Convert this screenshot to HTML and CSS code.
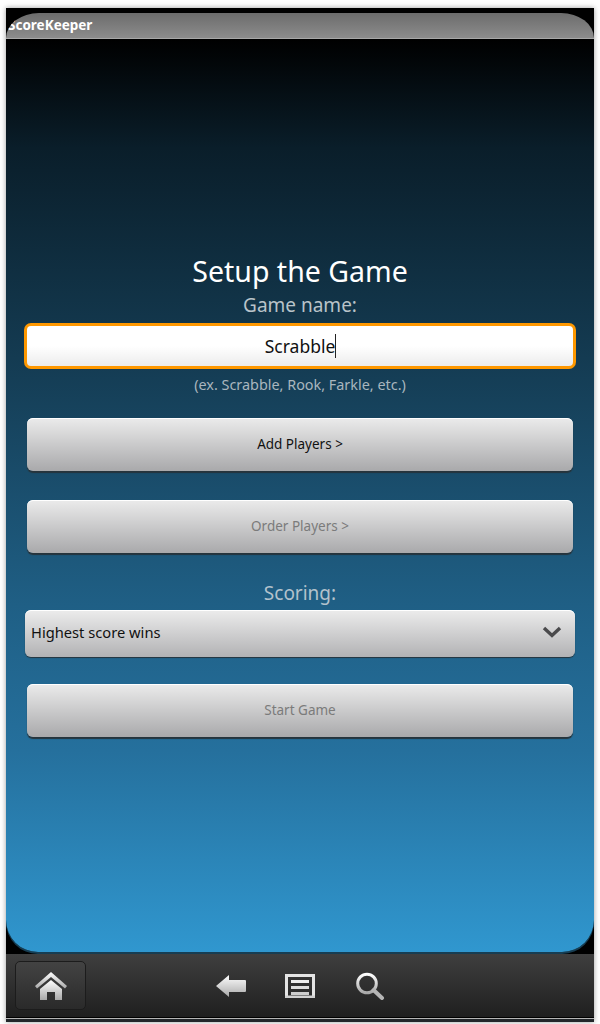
FILE: index.html
```html
<!DOCTYPE html>
<html lang="en">
<head>
  <meta charset="UTF-8">
  <title>ScoreKeeper</title>
  <link rel="stylesheet" href="styles.css">
</head>
<body>
  <div class="device">
    <div class="screen">
      <div class="title-bar">ScoreKeeper</div>
      <div class="content">
        <h1>Setup the Game</h1>
        <div class="label">Game name:</div>
        <div class="name-input"><span class="name-text">Scrabble</span></div>
        <div class="hint">(ex. Scrabble, Rook, Farkle, etc.)</div>
        <button class="btn btn-add">Add Players &gt;</button>
        <button class="btn btn-order off">Order Players &gt;</button>
        <div class="label label-scoring">Scoring:</div>
        <div class="select">
          <span>Highest score wins</span>
          <svg class="chevron" width="20" height="12" viewBox="0 0 20 12"><path d="M2 2 L10 9.5 L18 2" fill="none" stroke="#4a4a4c" stroke-width="3.4"/></svg>
        </div>
        <button class="btn btn-start off">Start Game</button>
      </div>
    </div>
    <div class="nav">
      <div class="home-btn">
        <svg width="34" height="30" viewBox="0 0 34 30">
          <defs>
            <linearGradient id="ico" x1="0" y1="0" x2="0" y2="1">
              <stop offset="0" stop-color="#ffffff"/>
              <stop offset="1" stop-color="#a9a9a9"/>
            </linearGradient>
          </defs>
          <path d="M1 15 L17 1 L33 15 L31 17.500 L17 6 L3 17.500 Z" fill="url(#ico)"/>
          <path d="M6 18 L17 9 L28 18 V29 H21 V21 H13 V29 H6 Z" fill="url(#ico)"/>
        </svg>
      </div>
      <svg class="ico-back" width="30" height="24" viewBox="0 0 30 24">
        <path d="M0 12 L13 1 V6 H29 Q30 6 30 7 V17 Q30 18 29 18 H13 V23 Z" fill="url(#ico)"/>
      </svg>
      <svg class="ico-menu" width="30" height="24" viewBox="0 0 30 24">
        <path d="M0 0 H30 V24 H27 V3 H3 V24 H0 Z" fill="#e4e4e4"/>
        <rect x="6" y="6" width="18" height="3" fill="#eeeeee"/>
        <rect x="6" y="12" width="18" height="3" fill="#dddddd"/>
        <rect x="6" y="18" width="18" height="3" fill="#cccccc"/>
        <rect x="0" y="21.500" width="30" height="2.500" fill="#d0d0d0"/>
      </svg>
      <svg class="ico-search" width="30" height="28" viewBox="0 0 30 28">
        <circle cx="12" cy="11.500" r="9.300" fill="none" stroke="url(#ico)" stroke-width="3"/>
        <path d="M18.500 18 L27 26" fill="none" stroke="#b5b5b5" stroke-width="4" stroke-linecap="round"/>
      </svg>
    </div>
    <div class="foot-line"></div>
    <div class="foot-dark"></div>
  </div>
</body>
</html>
```

FILE: styles.css
```css
html, body {
  margin: 0;
  padding: 0;
  background: #fff;
}
body {
  width: 600px;
  height: 1024px;
  overflow: hidden;
  font-family: "Noto Sans", "Open Sans", sans-serif;
}
.device {
  margin: 8px 6px 0 6px;
  height: 1014px;
  display: flex;
  flex-direction: column;
  background: #000;
  box-shadow: 0 0 5px 0 rgba(130, 130, 130, 0.8);
}
.screen {
  background: #000;
  padding: 5px 0 0 0;
  height: 944px;
  box-sizing: border-box;
  display: flex;
  flex-direction: column;
  flex: none;
}
.title-bar {
  height: 25px;
  border-radius: 33px 33px 0 0 / 25px 25px 0 0;
  border-bottom: 1px solid #a8a8a8;
  background: linear-gradient(#6c6c6c, #8c8c8c);
  color: #fff;
  font-size: 13.500px;
  font-weight: 700;
  line-height: 25px;
  padding-left: 2px;
  overflow: hidden;
  flex: none;
}
.content {
  flex: 1;
  border-radius: 0 0 32px 32px;
  background: linear-gradient(#000 0%, #0a1e2a 12%, #143b52 35%, #1f5f85 62%, #25709d 78%, #3097cf 100%);
  box-shadow: 0 2px 0 #173d52;
  display: flex;
  flex-direction: column;
  align-items: center;
  padding-top: 213px;
  box-sizing: border-box;
}
h1 {
  margin: 0;
  color: #fff;
  font-size: 28.500px;
  font-weight: 400;
  line-height: 38px;
  height: 38px;
}
.label {
  color: #b9c3c9;
  font-size: 19px;
  line-height: 26px;
  margin-top: 2px;
  height: 31px;
}
.name-input {
  width: 546px;
  height: 40px;
  border: 3px solid #ff9800;
  border-radius: 7px;
  background: linear-gradient(#fff 50%, #ececec);
  text-align: center;
  color: #111;
  font-size: 17.500px;
  line-height: 40px;
  flex: none;
}
.name-text {
  border-right: 1px solid #222;
  margin-left: 1px;
}
.hint {
  color: #a9b6be;
  font-size: 14.400px;
  line-height: 20px;
  margin-top: 6px;
}
.btn {
  display: block;
  width: 546px;
  height: 53px;
  padding: 0 0 2px 0;
  border: none;
  border-radius: 6px;
  background: linear-gradient(#ebebeb, #a9a9ab);
  box-shadow: inset 0 1px 0 #fff, 0 2px 1px #26343c;
  color: #111;
  font-family: inherit;
  font-size: 13.500px;
  flex: none;
}
.btn-add {
  margin-top: 23px;
}
.btn-order {
  margin-top: 29px;
}
.off {
  color: #7b7b7b;
}
.label-scoring {
  margin-top: 27px;
  height: 26px;
  color: #b3c2cc;
}
.select {
  width: 550px;
  height: 47px;
  margin-top: 4px;
  box-sizing: border-box;
  padding: 0 13px 3px 6px;
  border-radius: 6px;
  background: linear-gradient(#ececec, #b2b2b4);
  box-shadow: inset 0 1px 0 #fff, 0 1px 1px #26343c;
  display: flex;
  align-items: center;
  justify-content: space-between;
  color: #111;
  font-size: 14.700px;
  flex: none;
}
.chevron {
  flex: none;
}
.btn-start {
  margin-top: 27px;
}
.nav {
  height: 63px;
  margin-top: 2px;
  background: linear-gradient(#3f3f3f, #1f1f1f);
  display: flex;
  align-items: center;
  flex: none;
}
.home-btn {
  width: 71px;
  height: 49px;
  margin-left: 9px;
  box-sizing: border-box;
  border-radius: 5px;
  border: 1px solid #1c1c1c;
  background: linear-gradient(#434343, #2a2a2a);
  display: flex;
  align-items: center;
  justify-content: center;
}
.ico-back {
  margin-left: 130px;
}
.ico-menu {
  margin-left: 39px;
}
.ico-search {
  margin-left: 40px;
}
.foot-line {
  height: 1px;
  margin-top: 1px;
  background: #b5b5b5;
  flex: none;
}
.foot-dark {
  flex: 1;
  background: #22262a;
}
```
